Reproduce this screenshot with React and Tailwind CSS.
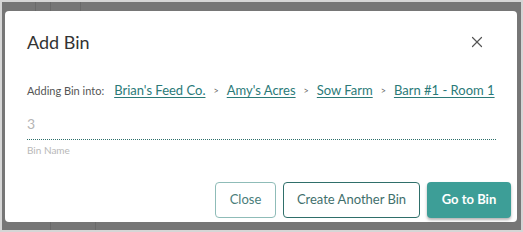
import { X } from 'lucide-react';

const crumbs = ["Brian's Feed Co.", "Amy's Acres", 'Sow Farm', 'Barn #1 - Room 1'];

const App = () => {
  return (
    <div className="w-[523px] h-[232px] bg-[#d6d6d6] p-[2px] font-['Lato','Noto_Sans',sans-serif]">
      <div className="relative h-full bg-[#767676] pt-[9px] pl-[3px] pr-[4px] pb-[8px] flex">
        {/* table lines behind the overlay */}
        <div className="absolute left-[33px] top-0 h-[9px] w-px bg-[#6a6a6a]" />
        <div className="absolute left-[48px] top-0 h-[9px] w-px bg-[#6a6a6a]" />
        <div className="absolute left-[78px] top-0 h-[9px] w-px bg-[#6a6a6a]" />
        <div className="absolute left-[48px] bottom-0 h-[8px] w-px bg-[#6a6a6a]" />
        <div className="absolute left-[93px] bottom-0 h-[8px] w-px bg-[#6a6a6a]" />

        <div className="relative flex-1 bg-white rounded-[4px] flex flex-col pl-[22px] pr-[6px] pt-[19px] pb-[4px]">
          <div className="flex items-center justify-between pr-[25px]">
            <h2 className="text-[18px] leading-[24px] text-[#333]">Add Bin</h2>
            <X className="w-[18px] h-[18px] text-[#555]" strokeWidth={1.6} />
          </div>

          <div className="mt-[28px] flex items-center text-[13px] leading-[17px]">
            <span className="text-[11px] text-[#555] mr-[10px]">Adding Bin into:</span>
            {crumbs.map((c, i) => (
              <span key={c} className="flex items-center">
                {i > 0 && <span className="text-[9px] text-[#666] mx-[8px]">&gt;</span>}
                <a className="text-[#2b7a78] underline underline-offset-2">{c}</a>
              </span>
            ))}
          </div>

          <div className="mt-[12px] mr-[15px] border-b border-dotted border-[#2f6f6a] pb-[4px]">
            <span className="text-[14px] leading-[18px] text-[#b5b5b5]">3</span>
          </div>
          <span className="mt-[4px] text-[10px] leading-[12px] text-[#b8b8b8]">Bin Name</span>

          <div className="mt-auto flex justify-end gap-[7px]">
            <button className="w-[61px] h-[36px] rounded-[4px] border border-[#8fbcb8] text-[13px] text-[#4a7d7a]">Close</button>
            <button className="w-[137px] h-[36px] rounded-[4px] border border-[#2f6f6a] text-[13px] text-[#3f6f6c]">Create Another Bin</button>
            <button className="w-[84px] h-[36px] rounded-[4px] bg-[#3d9e97] text-[13px] font-bold text-white shadow-[0_2px_3px_rgba(0,0,0,0.3)]">Go to Bin</button>
          </div>
        </div>
      </div>
    </div>
  );
};

export default App;
